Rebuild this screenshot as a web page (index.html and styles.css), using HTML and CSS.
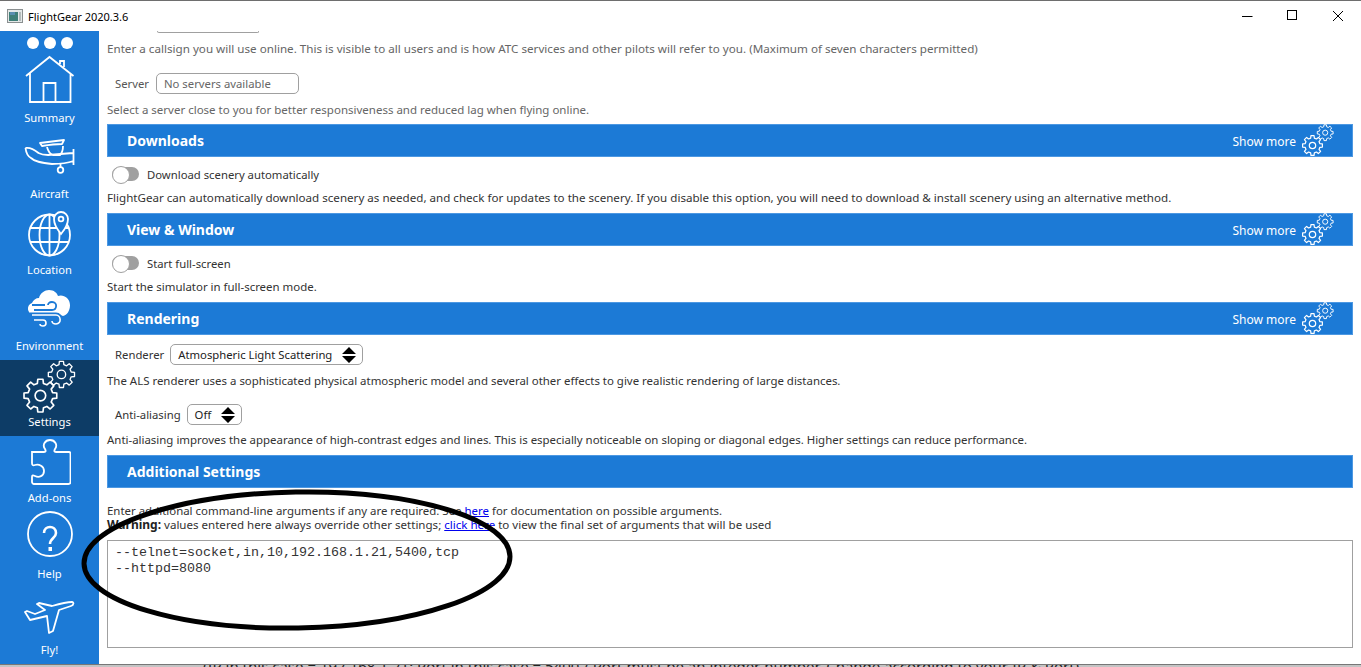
FILE: index.html
```html
<!DOCTYPE html>
<html>

<head>
    <meta charset="utf-8">
    <title>FlightGear 2020.3.6</title>
    <link rel="stylesheet" href="styles.css">
</head>

<body>
    <svg width="0" height="0" class="defs">
        <defs>
            <g id="gear">
                <path d="M7.37-1.84L9.88-1.56V1.56L7.37 1.84L6.51 3.91L8.09 5.88L5.88 8.09L3.91 6.51L1.84 7.37L1.56 9.88H-1.56L-1.84 7.37L-3.91 6.51L-5.88 8.09L-8.09 5.88L-6.51 3.91L-7.37 1.84L-9.88 1.56V-1.56L-7.37-1.84L-6.51-3.91L-8.09-5.88L-5.88-8.09L-3.91-6.51L-1.84-7.37L-1.56-9.88H1.56L1.84-7.37L3.91-6.51L5.88-8.09L8.09-5.88L6.51-3.91z" />
                <circle r="3.2" />
            </g>
            <g id="gears">
                <use href="#gear" />
                <use href="#gear" transform="translate(12.7 -12.8) scale(.8)" />
            </g>
        </defs>
    </svg>

    <div class="titlebar">
        <svg class="app-icon" width="16" height="14" viewBox="0 0 16 14">
            <rect x="0.5" y="0.5" width="15" height="13" fill="#e4e8e8" stroke="#8a8f90" />
            <rect x="2" y="3" width="9" height="9" fill="#3f7f78" />
            <rect x="3" y="3" width="5" height="3" fill="#5a8fb0" />
            <rect x="12" y="3" width="2" height="9" fill="#b4bcbc" />
        </svg>
        <span class="app-title">FlightGear 2020.3.6</span>
        <div class="win-buttons">
            <svg width="12" height="12" viewBox="0 0 12 12"><path d="M0 6.5h10.5" stroke="#000" fill="none" /></svg>
            <svg width="12" height="12" viewBox="0 0 12 12"><rect x="0.5" y="0.5" width="9" height="9" stroke="#000" fill="none" /></svg>
            <svg width="12" height="12" viewBox="0 0 12 12"><path d="M1 1l10 10M11 1L1 11" stroke="#000" fill="none" /></svg>
        </div>
    </div>

    <div class="app">
        <div class="sidebar">
            <div class="dots"><i></i><i></i><i></i></div>
            <div class="nav-item">
                <svg class="nav-icon" width="50" height="50" viewBox="0 0 50 50" fill="none" stroke="#fff" stroke-width="1.8">
                    <path d="M1 21L24.5 2L48.5 21M5 18V47H45.5V18M18.5 47V28H30.5V47M35 9V6H39V12" />
                </svg>
                <span>Summary</span>
            </div>
            <div class="nav-item">
                <svg class="nav-icon" width="52" height="50" viewBox="0 0 52 50" fill="none" stroke="#fff" stroke-width="1.8" stroke-linejoin="round">
                    <path d="M1.5 17C6 16 9.5 18 14.5 22C18 24 21 24 24 24L49 22M1.5 17C2 21 3 25 7 27C11 31 18 32 28 33C36 33 44 32 49.5 30M49.5 18V34" />
                    <path d="M16 12C24 11 32 10 40 9L38 13C32 13 24 14 18 15zM23 16C24 20 26 23 29 24H36C38 22 39 19 39 15M36.5 33V36" />
                    <circle cx="36.5" cy="39" r="2.8" />
                </svg>
                <span>Aircraft</span>
            </div>
            <div class="nav-item">
                <svg class="nav-icon" width="50" height="50" viewBox="0 0 50 50" fill="none" stroke="#fff" stroke-width="1.8">
                    <circle cx="24.5" cy="28" r="20.5" />
                    <ellipse cx="24.5" cy="28" rx="10" ry="20.5" />
                    <path d="M24.5 8v40M5 21h39M5 35h39" />
                    <path d="M36 27c-5-6-7-10-7-15a7 7 0 0 1 14 0c0 5-2 9-7 15z" fill="#1c7ad6" />
                    <circle cx="36" cy="12" r="2.4" />
                </svg>
                <span>Location</span>
            </div>
            <div class="nav-item">
                <svg class="nav-icon" width="50" height="50" viewBox="0 0 50 50">
                    <path d="M8 31C2 31 1 22 7 20C8 17 11 15 14 15C15 10 20 7 24 7C29 7 32 10 33 13C38 11 45 15 45 22C45 28 42 32 38 33L33 31z" fill="#fff" />
                    <path d="M9 27H27c5 0 6-8 0-8c-3 0-4 2-4 3M7 22H20" fill="none" stroke="#1c7ad6" stroke-width="1.8" />
                    <path d="M5 32H31c5 0 6 9 0 9c-3 0-4-2-4-3" fill="none" stroke="#1c7ad6" stroke-width="5" />
                    <path d="M7 32H31c5 0 6 9 0 9c-3 0-4-2-4-3M9 37H18c4 0 4 6 0 6c-2 0-3-1-3-2" fill="none" stroke="#fff" stroke-width="1.6" />
                </svg>
                <span>Environment</span>
            </div>
            <div class="nav-item active">
                <svg class="nav-icon settings-icon" width="53" height="53" viewBox="-10.5 -21.5 32 32" fill="none" stroke="#fff" stroke-width="1" stroke-linejoin="round">
                    <use href="#gears" />
                </svg>
                <span>Settings</span>
            </div>
            <div class="nav-item">
                <svg class="nav-icon" width="42" height="50" viewBox="0 0 42 50" fill="none" stroke="#fff" stroke-width="1.8">
                    <path d="M3 17H15c2 0 2-1 1-3c-3-4 0-9 5-9s8 5 5 9c-1 2-1 3 1 3H40c1 0 1.500 1 1.500 2V47c0 1-1 2-2 2H5c-1 0-2-1-2-2V42c0-2 1-2 3-1c4 2 9 0 9-5s-5-7-9-6c-2 1-3 0-3-2z" />
                </svg>
                <span>Add-ons</span>
            </div>
            <div class="nav-item">
                <svg class="nav-icon help-icon" width="46" height="46" viewBox="0 0 46 46" fill="none" stroke="#fff" stroke-width="1.8">
                    <circle cx="23" cy="23" r="22" />
                    <path d="M17 22c0-4 3-6 6-6s6 2 6 6c0 5-6 5-6 11" stroke-width="2.6" />
                    <rect x="21.500" y="36" width="3.500" height="4" fill="#fff" stroke="none" />
                </svg>
                <span>Help</span>
            </div>
            <div class="nav-item">
                <svg class="nav-icon" width="52" height="40" viewBox="0 0 52 40" fill="none" stroke="#fff" stroke-width="1.8" stroke-linejoin="round">
                    <path d="M48 5C42 5 35 7 28 9L15 6L13 7L21 13L11 17L3 14L1 15L6 23L23 19L25 36L29 34L35 13L47 9C50 8 50 5 48 5z" />
                </svg>
                <span>Fly!</span>
            </div>
        </div>

        <div class="main">
            <div class="clipped-input"></div>
            <p class="desc callsign-desc">Enter a callsign you will use online. This is visible to all users and is how ATC services and other pilots will refer to you. (Maximum of seven characters permitted)</p>
            <div class="row server-row">
                <label>Server</label>
                <div class="field">No servers available</div>
            </div>
            <p class="desc server-desc">Select a server close to you for better responsiveness and reduced lag when flying online.</p>

            <div class="section-head">
                <h2>Downloads</h2>
                <span class="more">Show more</span>
                <svg class="head-gears" width="32" height="32" viewBox="-10.5 -21.5 32 32" fill="none" stroke="#fff" stroke-width="1.2" stroke-linejoin="round"><use href="#gears" /></svg>
            </div>
            <div class="row toggle-row"><i class="toggle"></i><span>Download scenery automatically</span></div>
            <p class="desc dark long">FlightGear can automatically download scenery as needed, and check for updates to the scenery. If you disable this option, you will need to download &amp; install scenery using an alternative method.</p>

            <div class="section-head">
                <h2>View &amp; Window</h2>
                <span class="more">Show more</span>
                <svg class="head-gears" width="32" height="32" viewBox="-10.5 -21.5 32 32" fill="none" stroke="#fff" stroke-width="1.2" stroke-linejoin="round"><use href="#gears" /></svg>
            </div>
            <div class="row toggle-row"><i class="toggle"></i><span>Start full-screen</span></div>
            <p class="desc dark">Start the simulator in full-screen mode.</p>

            <div class="section-head">
                <h2>Rendering</h2>
                <span class="more">Show more</span>
                <svg class="head-gears" width="32" height="32" viewBox="-10.5 -21.5 32 32" fill="none" stroke="#fff" stroke-width="1.2" stroke-linejoin="round"><use href="#gears" /></svg>
            </div>
            <div class="row select-row">
                <label>Renderer</label>
                <div class="select">Atmospheric Light Scattering<svg width="14" height="16" viewBox="0 0 14 16"><path d="M7 0l7 7H0zM7 16l7-7H0z" fill="#000" /></svg></div>
            </div>
            <p class="desc dark">The ALS renderer uses a sophisticated physical atmospheric model and several other effects to give realistic rendering of large distances.</p>
            <div class="row select-row aa-row">
                <label>Anti-aliasing</label>
                <div class="select">Off<svg width="14" height="16" viewBox="0 0 14 16"><path d="M7 0l7 7H0zM7 16l7-7H0z" fill="#000" /></svg></div>
            </div>
            <p class="desc dark">Anti-aliasing improves the appearance of high-contrast edges and lines. This is especially noticeable on sloping or diagonal edges. Higher settings can reduce performance.</p>

            <div class="section-head">
                <h2>Additional Settings</h2>
            </div>
            <p class="desc dark args-note">Enter additional command-line arguments if any are required. See <a href="#">here</a> for documentation on possible arguments.<br><b>Warning:</b> <span class="warn">values entered here always override other settings; <a href="#">click here</a> to view the final set of arguments that will be used</span></p>
            <div class="args-box">--telnet=socket,in,10,192.168.1.21,5400,tcp<br>--httpd=8080</div>
        </div>
    </div>

    <div class="behind"><span>(IP in this case = 192.168.1.21; Port in this case = 5400 / Port must be an integer number. Change according to your IP &amp; Port).</span></div>

    <svg class="scribble" width="440" height="150" viewBox="0 0 440 150">
        <ellipse cx="219" cy="71" rx="213" ry="68" fill="none" stroke="#000" stroke-width="5" transform="rotate(-1 219 71)" />
    </svg>
</body>

</html>
```

FILE: styles.css
```css
* {
    box-sizing: border-box;
}

body {
    margin: 0;
    height: 667px;
    overflow: hidden;
    position: relative;
    background: #fff;
    font-family: 'Noto Sans', sans-serif;
    font-size: 11.65px;
    color: #555;
}

.titlebar {
    height: 31px;
    display: flex;
    align-items: center;
    border-top: 1px solid #6e6e6e;
    padding-left: 7px;
    background: #fff;
}

.app-icon {
    margin-right: 5px;
}

.app-title {
    color: #000;
    font-size: 11px;
}

.win-buttons {
    margin-left: auto;
    display: flex;
    gap: 33px;
    padding-right: 17px;
}

.app {
    display: flex;
    height: 633px;
}

.sidebar {
    width: 99px;
    flex: none;
    background: #1c7ad6;
    padding-top: 6px;
}

.dots {
    display: flex;
    justify-content: center;
    gap: 5px;
    height: 19px;
}

.dots i {
    width: 12px;
    height: 12px;
    border-radius: 50%;
    background: #fff;
}

.nav-item {
    height: 76px;
    display: flex;
    flex-direction: column;
    align-items: center;
    justify-content: flex-end;
    padding-bottom: 6px;
    color: #fff;
    font-size: 11.2px;
    line-height: 16px;
}

.nav-item.active {
    background: #0d3c66;
}

.nav-icon {
    flex: none;
    margin-bottom: 5px;
}

.settings-icon {
    margin-bottom: 1px;
}

.help-icon {
    margin-bottom: 9px;
}

.main {
    flex: 1;
    padding: 0 8px;
    overflow: hidden;
}

.clipped-input {
    width: 102px;
    height: 2px;
    margin-left: 50px;
    border: 1px solid #a0a0a0;
    border-top: 0;
    border-radius: 0 0 6px 6px;
}

.desc {
    margin: 0;
    line-height: 16px;
    color: #666;
}

.desc.dark {
    color: #333;
    font-size: 11.45px;
}

.desc.long {
    font-size: 11.6px;
}

.callsign-desc {
    margin-top: 8px;
}

.row {
    display: flex;
    align-items: center;
    color: #555;
    font-size: 11.3px;
}

.row label {
    margin-left: 8px;
    margin-right: 6px;
}

.server-row {
    height: 21px;
    margin-top: 16px;
}

.server-row label {
    margin-right: 7px;
}

.field {
    width: 143px;
    height: 21px;
    line-height: 19px;
    padding-left: 7px;
    border: 1px solid #a0a0a0;
    border-radius: 5px;
    color: #666;
}

.server-desc {
    margin-top: 8px;
    margin-bottom: 6px;
    font-size: 11.5px;
}

.section-head {
    height: 33px;
    display: flex;
    align-items: center;
    position: relative;
    background: #1c7ad6;
    border: 1px solid #4d98e2;
    color: #fff;
    padding-left: 19px;
}

.section-head h2 {
    margin: 0;
    font-size: 14px;
    font-weight: bold;
}

.more {
    margin-left: auto;
    margin-right: 56px;
    margin-top: 2px;
    font-size: 12px;
}

.head-gears {
    position: absolute;
    right: 18px;
    top: -1px;
}

.toggle-row {
    height: 20px;
    margin-top: 7px;
    margin-bottom: 6px;
    color: #333;
}

.toggle {
    width: 27px;
    height: 14px;
    margin: 0 8px 0 5px;
    border-radius: 7px;
    background: #a0a0a0;
    position: relative;
}

.toggle::before {
    content: "";
    position: absolute;
    left: 0;
    top: -1px;
    width: 16px;
    height: 16px;
    border-radius: 50%;
    background: #fff;
    border: 1px solid #a0a0a0;
}

.toggle-row+.desc {
    margin-bottom: 7px;
}

.select-row {
    height: 21px;
    margin-top: 9px;
    color: #333;
}

.select {
    height: 21px;
    display: flex;
    align-items: center;
    gap: 10px;
    padding: 0 6px 0 7px;
    border: 1px solid #a0a0a0;
    border-radius: 5px;
    color: #222;
}

.select-row+.desc {
    margin-top: 8px;
}

.aa-row {
    margin-top: 15px;
}

.aa-row+.desc {
    margin-top: 7px;
    margin-bottom: 7px;
}

.args-note {
    margin-top: 16px;
    line-height: 14px;
}

.args-note a {
    color: #0000ee;
}

.args-note b {
    color: #222;
    font-size: 12px;
}

.args-note .warn {
    font-size: 11.55px;
}

.args-box {
    height: 108px;
    margin-top: 8px;
    padding: 4px 7px;
    border: 1px solid #a0a0a0;
    font-family: 'Liberation Mono', monospace;
    font-size: 13.33px;
    line-height: 16px;
    color: #333;
}

.behind {
    height: 3px;
    overflow: hidden;
    padding-left: 203px;
    border-top: 1px solid #777;
    background: #c4c4c4;
    font-size: 15px;
    line-height: 10px;
    color: #222;
    white-space: nowrap;
}

.behind span {
    display: block;
    margin-top: -4px;
}

.scribble {
    position: absolute;
    left: 78px;
    top: 489px;
}

.defs {
    position: absolute;
}
```
